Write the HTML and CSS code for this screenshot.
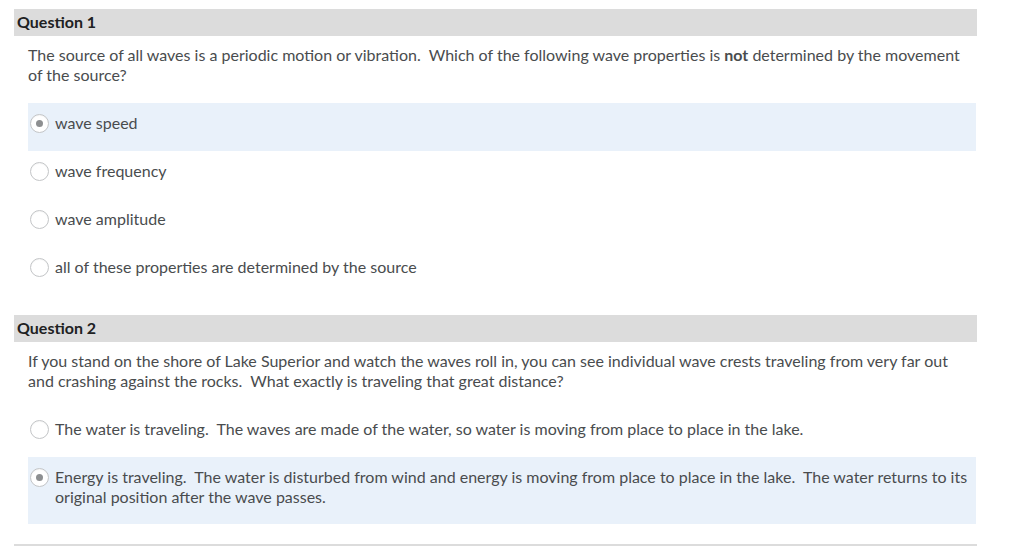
FILE: index.html
```html
<!DOCTYPE html>
<html>
<head>
<meta charset="utf-8">
<link rel="stylesheet" href="styles.css">
</head>
<body>
<div class="quiz">
  <section class="question">
    <h2 class="q-head">Question 1</h2>
    <p class="q-text">The source of all waves is a periodic motion or vibration.&nbsp; Which of the following wave properties is <strong>not</strong> determined by the movement of the source?</p>
    <ul class="options">
      <li class="option selected"><span class="radio"></span><span class="label">wave speed</span></li>
      <li class="option"><span class="radio"></span><span class="label">wave frequency</span></li>
      <li class="option"><span class="radio"></span><span class="label">wave amplitude</span></li>
      <li class="option"><span class="radio"></span><span class="label">all of these properties are determined by the source</span></li>
    </ul>
  </section>
  <section class="question">
    <h2 class="q-head">Question 2</h2>
    <p class="q-text">If you stand on the shore of Lake Superior and watch the waves roll in, you can see individual wave crests traveling from very far out and crashing against the rocks.&nbsp; What exactly is traveling that great distance?</p>
    <ul class="options">
      <li class="option"><span class="radio"></span><span class="label">The water is traveling.&nbsp; The waves are made of the water, so water is moving from place to place in the lake.</span></li>
      <li class="option selected"><span class="radio"></span><span class="label">Energy is traveling.&nbsp; The water is disturbed from wind and energy is moving from place to place in the lake.&nbsp; The water returns to its original position after the wave passes.</span></li>
    </ul>
  </section>
  <section class="question">
    <div class="q-head q-next"></div>
  </section>
</div>
</body>
</html>
```
FILE: styles.css
```css
html, body {
  margin: 0;
  padding: 0;
  background: #ffffff;
}
body {
  font-family: Lato, "Open Sans", "Liberation Sans", sans-serif;
  color: #494c4e;
  font-size: 16px;
}
.quiz {
  padding: 9px 0 0 14px;
  width: 963px;
}
.question {
  margin-bottom: 20px;
}
.q-head {
  margin: 0;
  height: 27px;
  line-height: 25px;
  padding-left: 3px;
  background: #dcdcdc;
  color: #202122;
  font-size: 16px;
  font-weight: 700;
  box-sizing: border-box;
}
.q-text {
  margin: 9px 0 19px 14px;
  line-height: 19.5px;
  padding-right: 10px;
}
.q-text strong {
  font-weight: 700;
}
.options {
  list-style: none;
  margin: 0 1px 0 14px;
  padding: 0;
}
.option {
  display: flex;
  align-items: flex-start;
  gap: 6px;
  padding: 10px 4px 18px 2px;
  line-height: 19.5px;
}
.option.selected {
  background: #e9f1fa;
}
.radio {
  flex: none;
  width: 17px;
  height: 17px;
  margin-top: 1px;
  border: 1px solid #c3c5c7;
  border-radius: 50%;
  background: #ffffff;
  position: relative;
  box-shadow: inset 0 1px 1px rgba(0,0,0,0.04);
}
.selected .radio::after {
  content: "";
  position: absolute;
  left: 5px;
  top: 5px;
  width: 7px;
  height: 7px;
  border-radius: 50%;
  background: #8d8f91;
}
```
